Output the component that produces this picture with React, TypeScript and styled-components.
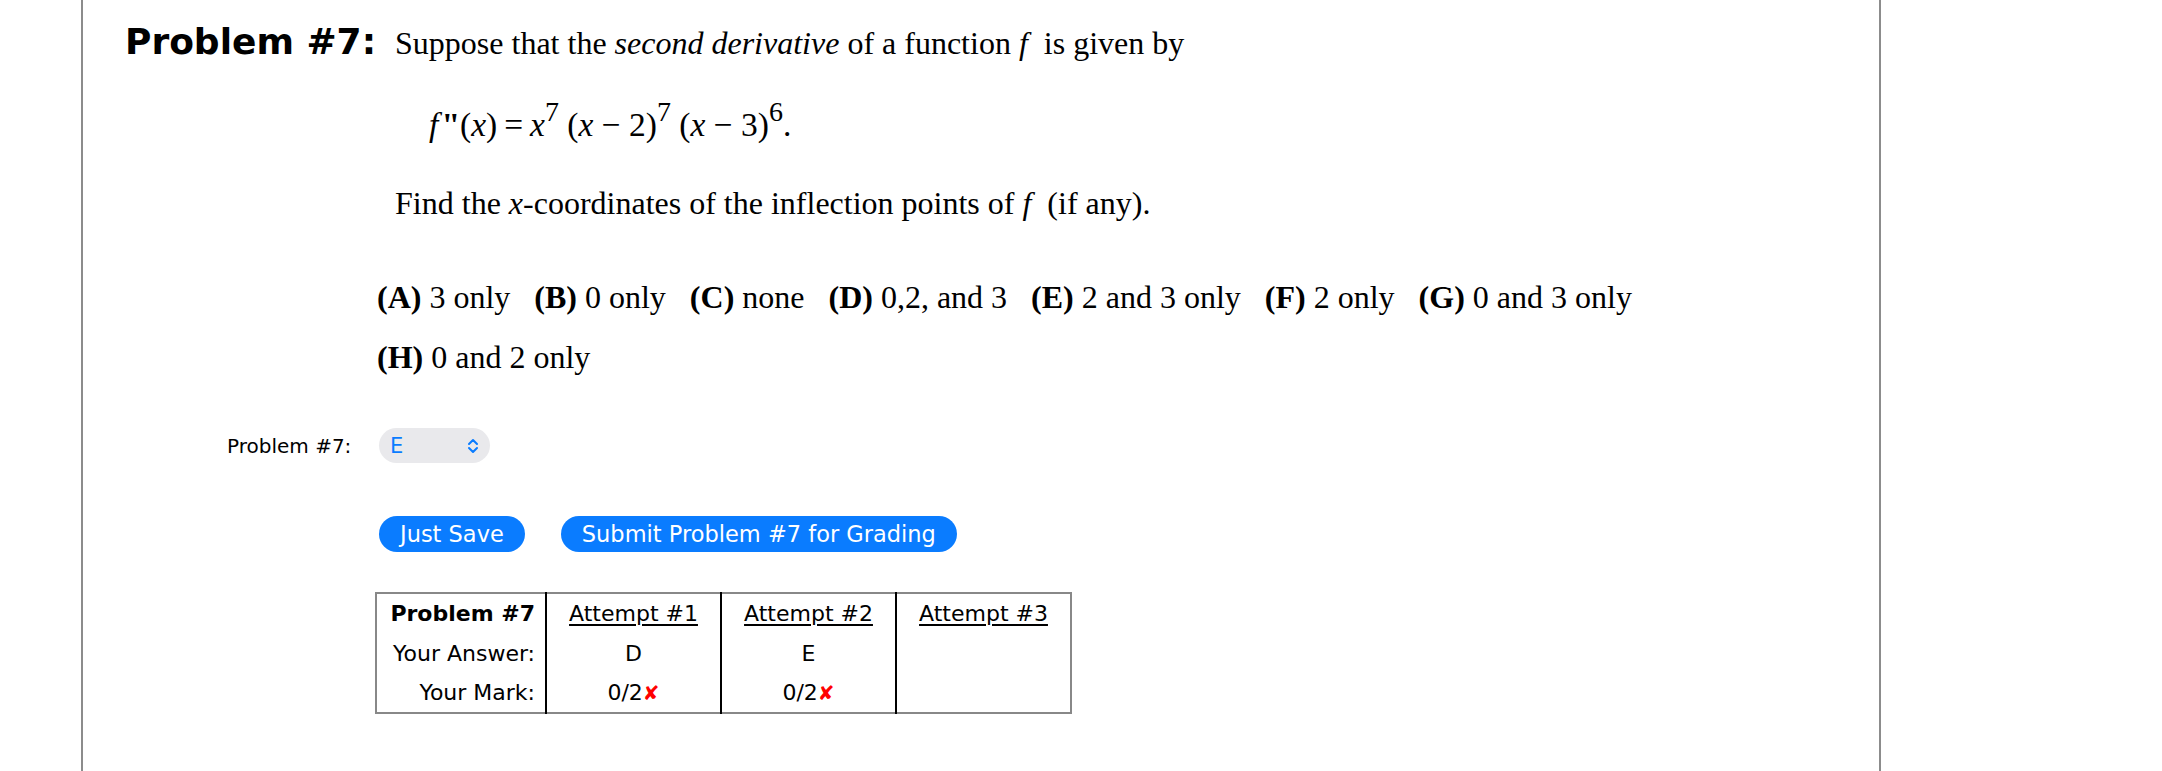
import styled, { createGlobalStyle } from 'styled-components';

const GlobalStyle = createGlobalStyle`
  html, body {
    margin: 0;
    padding: 0;
    background: #fff;
  }
`;

const SANS = `"DejaVu Sans", Verdana, sans-serif`;
const SERIF = `"Liberation Serif", "Times New Roman", serif`;

const choices: { key: string; text: string }[] = [
  { key: 'A', text: '3 only' },
  { key: 'B', text: '0 only' },
  { key: 'C', text: 'none' },
  { key: 'D', text: '0,2, and 3' },
  { key: 'E', text: '2 and 3 only' },
  { key: 'F', text: '2 only' },
  { key: 'G', text: '0 and 3 only' },
  { key: 'H', text: '0 and 2 only' },
];

const attempts = [
  { title: 'Attempt #1', answer: 'D', mark: '0/2', wrong: true },
  { title: 'Attempt #2', answer: 'E', mark: '0/2', wrong: true },
  { title: 'Attempt #3', answer: '', mark: '', wrong: false },
];

export default function App() {
  return (
    <>
      <GlobalStyle />
      <PageSt>
        <ProblemRowSt>
          <ProblemLabelSt>Problem #7:</ProblemLabelSt>
          <StatementSt>
            <TextLineSt>
              Suppose that the <em>second derivative</em> of a function <Var>f</Var>&nbsp; is
              given by
            </TextLineSt>
            <EquationSt>
              <Var>f</Var>
              <PrimeSt>"</PrimeSt>(<Var>x</Var>)<OpSt>=</OpSt><Var>x</Var>
              <sup>7</sup> (<Var>x</Var> − 2)<sup>7</sup> (<Var>x</Var> − 3)<sup>6</sup>.
            </EquationSt>
            <TextLineSt>
              Find the <Var>x</Var>-coordinates of the inflection points of <Var>f</Var>&nbsp;
              (if any).
            </TextLineSt>
          </StatementSt>
        </ProblemRowSt>

        <ChoicesSt>
          {choices.map((c) => (
            <ChoiceSt key={c.key}>
              <b>({c.key})</b> {c.text}
            </ChoiceSt>
          ))}
        </ChoicesSt>

        <AnswerRowSt>
          <AnswerLabelSt>Problem #7:</AnswerLabelSt>
          <SelectSt>
            <span>E</span>
            <svg width="14" height="16" viewBox="0 0 14 16" fill="none">
              <path
                d="M3 6l4-4 4 4M3 10l4 4 4-4"
                stroke="#0a7cff"
                strokeWidth="2"
                strokeLinecap="round"
                strokeLinejoin="round"
              />
            </svg>
          </SelectSt>
        </AnswerRowSt>

        <ButtonRowSt>
          <ButtonSt>Just Save</ButtonSt>
          <ButtonSt>Submit Problem #7 for Grading</ButtonSt>
        </ButtonRowSt>

        <AttemptTableSt>
          <tbody>
            <tr>
              <HeadCellSt>Problem #7</HeadCellSt>
              {attempts.map((a) => (
                <CellSt key={a.title}>
                  <AttemptLinkSt>{a.title}</AttemptLinkSt>
                </CellSt>
              ))}
            </tr>
            <tr>
              <RowLabelSt>Your Answer:</RowLabelSt>
              {attempts.map((a) => (
                <CellSt key={a.title}>{a.answer}</CellSt>
              ))}
            </tr>
            <tr>
              <RowLabelSt>Your Mark:</RowLabelSt>
              {attempts.map((a) => (
                <CellSt key={a.title}>
                  {a.mark}
                  {a.wrong && <CrossSt>✘</CrossSt>}
                </CellSt>
              ))}
            </tr>
          </tbody>
        </AttemptTableSt>
      </PageSt>
    </>
  );
}

const PageSt = styled.div`
  box-sizing: border-box;
  margin-left: 81px;
  width: 1800px;
  min-height: 771px;
  border-left: 2px solid #8c8c8c;
  border-right: 2px solid #8c8c8c;
  padding-top: 18px;
  color: #000;
`;

const ProblemRowSt = styled.div`
  display: flex;
  align-items: baseline;
  padding-left: 42px;
`;

const ProblemLabelSt = styled.h2`
  margin: 0 19px 0 0;
  font-family: ${SANS};
  font-size: 36px;
  font-weight: 700;
  line-height: 48px;
  white-space: nowrap;
`;

const StatementSt = styled.div`
  font-family: ${SERIF};
  font-size: 32px;
  line-height: 34px;

  em {
    font-style: italic;
  }
`;

const TextLineSt = styled.p`
  margin: 0;
`;

const Var = styled.i`
  font-style: italic;
`;

const PrimeSt = styled.b`
  font-weight: 700;
  margin-left: 3px;
`;

const OpSt = styled.span`
  margin: 0 7px;
`;

const EquationSt = styled.p`
  margin: 48px 0 44px 34px;
  font-size: 33.5px;

  sup {
    font-size: 28px;
    line-height: 0;
    vertical-align: 15px;
  }
`;

const ChoicesSt = styled.div`
  display: flex;
  flex-wrap: wrap;
  column-gap: 24px;
  row-gap: 26px;
  max-width: 1320px;
  margin: 60px 0 0 294px;
  font-family: ${SERIF};
  font-size: 32px;
  line-height: 34px;
`;

const ChoiceSt = styled.span`
  white-space: nowrap;

  b {
    font-weight: 700;
  }
`;

const AnswerRowSt = styled.div`
  display: flex;
  align-items: center;
  margin: 54px 0 0 144px;
`;

const AnswerLabelSt = styled.span`
  width: 128px;
  margin-right: 24px;
  font-family: ${SANS};
  font-size: 20px;
`;

const SelectSt = styled.div`
  box-sizing: border-box;
  display: flex;
  align-items: center;
  justify-content: space-between;
  width: 111px;
  height: 35px;
  padding: 0 10px 0 11px;
  border-radius: 18px;
  background: #e9e9ec;
  color: #0a7cff;
  font-family: ${SANS};
  font-size: 21px;
`;

const ButtonRowSt = styled.div`
  display: flex;
  gap: 36px;
  margin: 53px 0 0 296px;
`;

const ButtonSt = styled.button`
  height: 36px;
  padding: 0 21px;
  border: none;
  border-radius: 18px;
  background: #0a7cff;
  color: #fff;
  font-family: ${SANS};
  font-size: 22.5px;
`;

const AttemptTableSt = styled.table`
  margin: 40px 0 0 292px;
  border: 2px solid #888;
  border-collapse: collapse;
  font-family: ${SANS};
  font-size: 22px;
`;

const CellSt = styled.td`
  box-sizing: border-box;
  width: 175px;
  height: 40px;
  padding: 0 6px;
  border-left: 2px solid #000;
  text-align: center;
  vertical-align: middle;
`;

const HeadCellSt = styled.th`
  box-sizing: border-box;
  width: 170px;
  padding: 0 10px 0 6px;
  text-align: right;
  font-weight: 700;
`;

const RowLabelSt = styled.td`
  padding: 0 10px 0 6px;
  text-align: right;
`;

const AttemptLinkSt = styled.span`
  text-decoration: underline;
  text-underline-offset: 3px;
`;

const CrossSt = styled.span`
  color: #f00;
  font-weight: 700;
  font-size: 20px;
`;
